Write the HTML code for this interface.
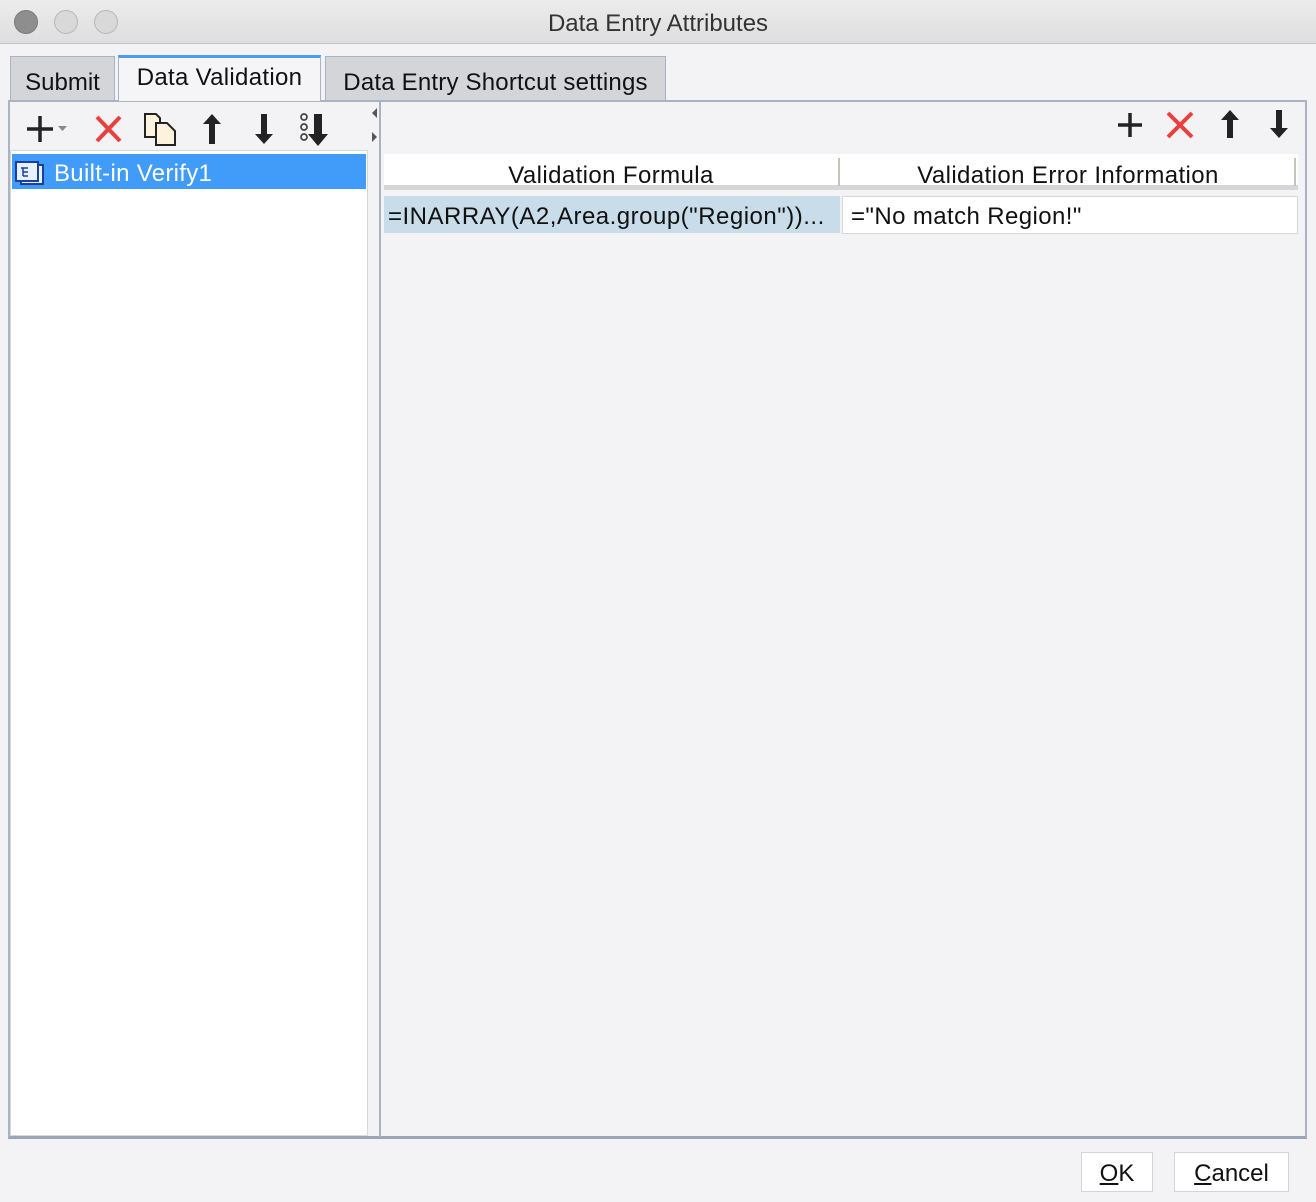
<!DOCTYPE html>
<html><head><meta charset="utf-8"><style>
*{box-sizing:border-box;margin:0;padding:0}
body{width:1316px;height:1202px;background:#f3f3f5;font-family:"Liberation Sans",sans-serif;color:#111;position:relative;overflow:hidden}
.a{position:absolute}
.title{left:0;top:0;width:1316px;height:44px;background:linear-gradient(#ececec,#dedede);border-bottom:1px solid #c4c4c4;text-align:center;font-size:24px;line-height:47px;color:#333}
.dot{width:24px;height:24px;border-radius:50%;top:10px;border:1px solid #b8b8b8;background:#d9d9d9}
.tab{height:44px;top:56px;border:1px solid #a9b3c4;border-bottom:none;background:#d4d5d9;font-size:24px;text-align:center;line-height:52px}
svg{position:absolute}
</style></head><body>
<div class="a title">Data Entry Attributes</div>
<div class="a dot" style="left:14px;background:#8e8e8e;border-color:#7a7a7a"></div>
<div class="a dot" style="left:54px"></div>
<div class="a dot" style="left:94px"></div>

<div class="a tab" style="left:10px;width:105px">Submit</div>
<div class="a tab" style="left:325px;width:341px;letter-spacing:0.2px">Data Entry Shortcut settings</div>
<div class="a tab" style="left:118px;width:203px;top:55px;height:46px;background:#f5f5f7;border-top:3px solid #4a9cf2;line-height:40px;z-index:2;letter-spacing:0.3px">Data Validation</div>

<div class="a" style="left:8px;top:100px;width:1299px;height:1039px;border:2px solid #a9b3c4;border-bottom:3px solid #9aa6b6;background:#f3f3f5"></div>
<div class="a" style="left:10px;top:150px;width:358px;height:986px;background:#fff;border:1px solid #d8d8d8"></div>
<div class="a" style="left:12px;top:154px;width:354px;height:35px;background:#419bf8"></div>
<svg style="left:14px;top:160px" width="32" height="26"><rect x="7" y="5" width="22" height="19" fill="#e8f0f8" stroke="#1a3fa0" stroke-width="2"/><rect x="2" y="2" width="22" height="19" fill="#e8f0f8" stroke="#1a3fa0" stroke-width="2"/><path d="M7 8h7M9 8v8M9 12h5M9 16h5" stroke="#1a3fa0" stroke-width="1.5"/></svg>
<div class="a" style="left:54px;top:160px;font-size:24px;color:#fff;letter-spacing:0.3px">Built-in Verify1</div>
<svg style="left:24px;top:112px" width="50" height="34"><path d="M3 17h26M16 4v26" stroke="#222" stroke-width="3.5"/><path d="M34 14h9l-4.5 5z" fill="#888"/></svg>
<svg style="left:92px;top:112px" width="34" height="34"><path d="M5 5l23 24M28 5L5 29" stroke="#e8403f" stroke-width="4"/></svg>
<svg style="left:143px;top:112px" width="36" height="36"><path d="M2 2h11l4 4v19H2z" fill="#fdf3dc" stroke="#222" stroke-width="2"/><path d="M13 11h11l8 8v14H13z" fill="#fdf3dc" stroke="#222" stroke-width="2"/></svg>
<svg style="left:198px;top:112px" width="28" height="34"><path d="M14 2l-9 10h6v20h6V12h6z" fill="#222"/></svg>
<svg style="left:250px;top:112px" width="28" height="34"><path d="M14 32l-9-10h6V2h6v20h6z" fill="#222"/></svg>
<svg style="left:297px;top:112px" width="40" height="36"><circle cx="7" cy="5" r="3" fill="none" stroke="#444" stroke-width="1.7"/><circle cx="7" cy="15" r="3" fill="none" stroke="#444" stroke-width="1.7"/><circle cx="7" cy="25" r="3" fill="none" stroke="#444" stroke-width="1.7"/><path d="M21 34l-10-12h6V2h8v20h6z" fill="#222"/></svg>
<div class="a" style="left:379px;top:102px;width:2px;height:1035px;background:#a9b3c4"></div>
<svg style="left:369px;top:106px" width="10" height="40"><path d="M8 2v10L3 7z M3 26v10l5-5z" fill="#555"/></svg>
<svg style="left:1116px;top:110px" width="28" height="30"><path d="M2 15h24M14 3v24" stroke="#222" stroke-width="3.5"/></svg>
<svg style="left:1165px;top:110px" width="30" height="30"><path d="M3 3l24 24M27 3L3 27" stroke="#e8403f" stroke-width="4"/></svg>
<svg style="left:1217px;top:108px" width="26" height="32"><path d="M13 2l-9 10h6v18h6V12h6z" fill="#222"/></svg>
<svg style="left:1266px;top:108px" width="26" height="32"><path d="M13 30l-9-10h6V2h6v18h6z" fill="#222"/></svg>
<div class="a" style="left:384px;top:154px;width:914px;height:36px;background:#fff;border-bottom:5px solid #d6d6d8"></div>
<div class="a" style="left:838px;top:158px;width:2px;height:28px;background:#c8c4bc"></div>
<div class="a" style="left:1294px;top:158px;width:2px;height:28px;background:#c8c4bc"></div>
<div class="a" style="left:384px;top:162px;width:454px;text-align:center;font-size:24px;letter-spacing:0.4px">Validation Formula</div>
<div class="a" style="left:840px;top:162px;width:456px;text-align:center;font-size:24px;letter-spacing:0.4px">Validation Error Information</div>
<div class="a" style="left:384px;top:196px;width:456px;height:37px;background:#c8dcea"></div>
<div class="a" style="left:842px;top:196px;width:456px;height:38px;background:#fff;border:1px solid #d8d8d8"></div>
<div class="a" style="left:388px;top:203px;font-size:24px;white-space:nowrap;letter-spacing:0.5px">=INARRAY(A2,Area.group("Region"))...</div>
<div class="a" style="left:851px;top:203px;font-size:24px;letter-spacing:0.4px">="No match Region!"</div>
<div class="a" style="left:1081px;top:1152px;width:72px;height:40px;background:#fff;border:1px solid #d4d4d4;font-size:24px;text-align:center;line-height:42px"><u>O</u>K</div>
<div class="a" style="left:1174px;top:1152px;width:115px;height:40px;background:#fff;border:1px solid #d4d4d4;font-size:24px;text-align:center;line-height:42px"><u>C</u>ancel</div>
</body></html>
